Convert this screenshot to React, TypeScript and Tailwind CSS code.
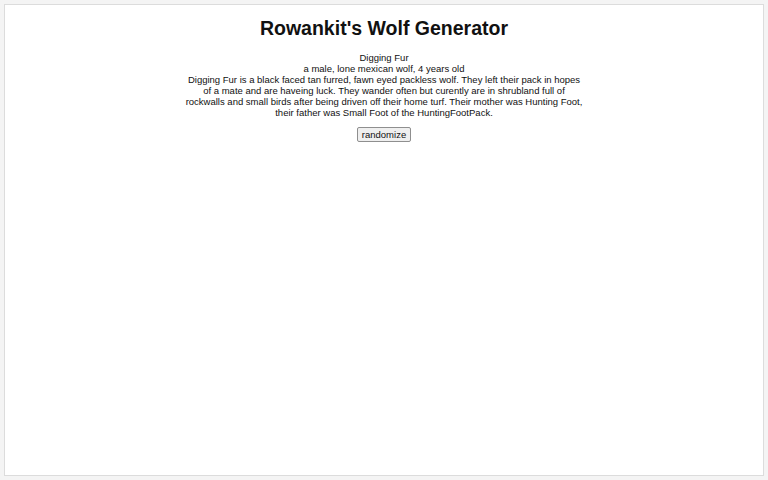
export default function App() {
  return (
    <div className="h-[480px] w-[768px] bg-[#f4f4f4] p-1" style={{ fontFamily: '"Liberation Sans", Arial, sans-serif' }}>
      <div className="flex h-[472px] flex-col items-center border border-[#dcdcdc] bg-white text-[#111]">
        <h1 className="mt-[12px] text-[19.5px] font-bold leading-[22px]">Rowankit's Wolf Generator</h1>
        <div className="mt-[13px] w-[402px] text-center text-[9.5px] leading-[11px]">
          <div>Digging Fur</div>
          <div>a male, lone mexican wolf, 4 years old</div>
          <div>
            Digging Fur is a black faced tan furred, fawn eyed packless wolf. They left their pack in hopes of a mate and
            are haveing luck. They wander often but curently are in shrubland full of rockwalls and small birds after being
            driven off their home turf. Their mother was Hunting Foot, their father was Small Foot of the HuntingFootPack.
          </div>
        </div>
        <button className="mt-[9px] rounded-[2px] border border-[#8f8f8f] bg-[#efefef] px-[4px] text-[9.5px] leading-[13px]">
          randomize
        </button>
      </div>
    </div>
  );
}
